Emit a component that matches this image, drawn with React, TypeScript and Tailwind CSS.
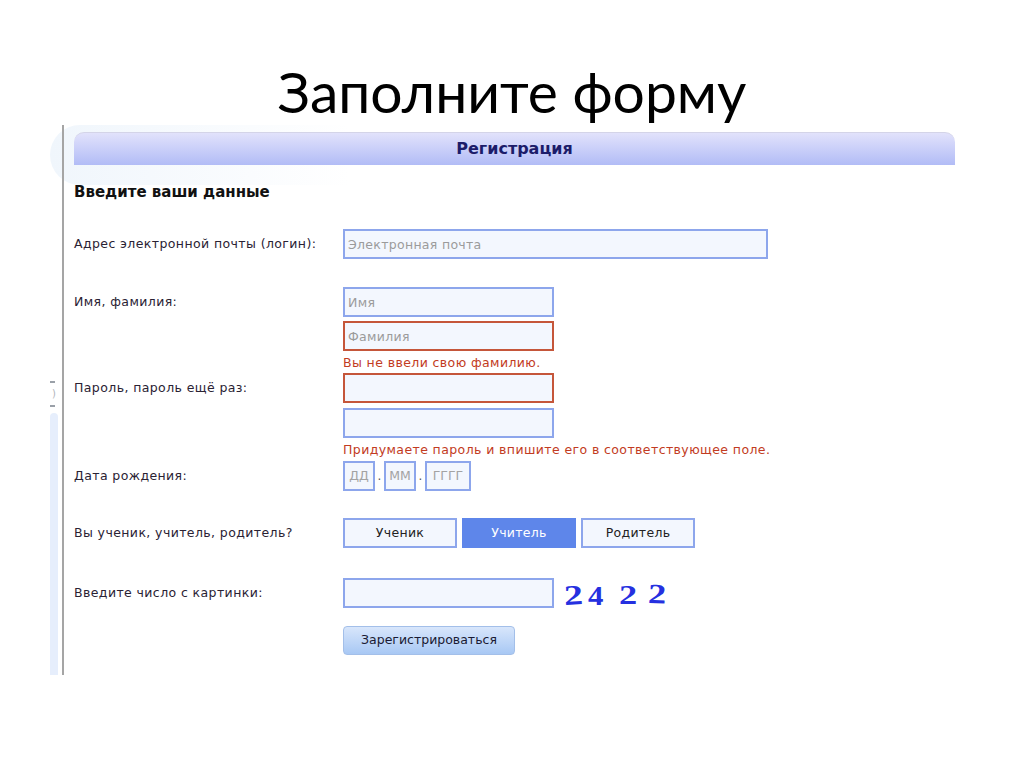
import React from 'react';

const labelCls = 'w-[269px] shrink-0 h-[30px] flex items-center text-[12.5px] tracking-[0.4px] text-[#2a2233]';
const inputCls =
  'block h-[30px] border-2 border-[#8da6ec] bg-[#f3f7fe] px-[3px] text-[12.5px] tracking-[0.3px] text-[#333] outline-none placeholder:text-[#9b9b9b]';
const errorInputCls =
  'block h-[30px] border-2 border-[#c5563a] bg-[#f3f7fe] px-[3px] text-[12.5px] tracking-[0.3px] text-[#333] outline-none placeholder:text-[#9b9b9b]';
const errorText = 'h-[16px] flex items-center text-[12.5px] tracking-[0.4px] text-[#c23b22]';

function DateBox({ text, w }: { text: string; w: string }) {
  return (
    <div className={`${w} h-[30px] border-2 border-[#8da6ec] bg-[#f3f7fe] flex items-center justify-center text-[12.5px] text-[#a3a3a3]`}>
      {text}
    </div>
  );
}

function RoleButton({ text, active }: { text: string; active?: boolean }) {
  return (
    <div
      className={
        active
          ? 'w-[114px] h-[30px] border-2 border-[#5e86ea] bg-[#5e86ea] flex items-center justify-center text-[12.5px] tracking-[0.3px] text-white'
          : 'w-[114px] h-[30px] border-2 border-[#8da6ec] bg-[#f3f7fe] flex items-center justify-center text-[12.5px] tracking-[0.3px] text-[#222]'
      }
    >
      {text}
    </div>
  );
}

export default function App() {
  return (
    <div className="relative w-[1024px] h-[767px] bg-white overflow-hidden font-['DejaVu_Sans',sans-serif]">
      {/* slide title */}
      <div className="h-[125px] pt-[60px] text-center font-['Lato',sans-serif] text-[57px] leading-[62px] text-black">
        Заполните форму
      </div>

      {/* screenshot */}
      <div className="relative flex ml-[50px] h-[550px]">
        {/* faint background swoosh */}
        <div className="absolute left-0 top-0 w-[300px] h-[60px] rounded-l-[30px] bg-gradient-to-r from-[#f0f6fc] to-white/0" />

        {/* left margin artifacts */}
        <div className="relative w-[12px] flex flex-col items-start">
          <div className="h-[256px]" />
          <div className="w-[5px] h-[2px] bg-[#9aa0a8]" />
          <div className="h-[14px] text-[10px] leading-[14px] text-[#b0b4ba] ml-[2px] mt-[4px]">)</div>
          <div className="w-[5px] h-[2px] bg-[#9aa0a8] mt-[4px]" />
          <div className="mt-[6px] w-[8px] flex-1 rounded-t-[4px] bg-[#e6eefc]" />
        </div>

        <div className="relative w-[2px] bg-[#a5a5a5]" />

        <div className="relative ml-[10px] w-[881px]">
          {/* header bar */}
          <div className="mt-[7px] h-[33px] rounded-t-[10px] border-t border-[#d4d4e8] bg-gradient-to-b from-[#e2e2fb] to-[#b2bcf6] flex items-center justify-center">
            <span className="text-[16px] font-bold text-[#1c1c6a]">Регистрация</span>
          </div>

          <div className="mt-[18px] h-[18px] flex items-center text-[15px] font-bold text-[#111]">Введите ваши данные</div>

          {/* email */}
          <div className="mt-[28px] flex">
            <div className={labelCls}>Адрес электронной почты (логин):</div>
            <input className={`${inputCls} w-[425px]`} placeholder="Электронная почта" readOnly />
          </div>

          {/* name */}
          <div className="mt-[28px] flex">
            <div className={labelCls}>Имя, фамилия:</div>
            <div className="flex flex-col">
              <input className={`${inputCls} w-[211px]`} placeholder="Имя" readOnly />
              <input className={`${errorInputCls} w-[211px] mt-[4px]`} placeholder="Фамилия" readOnly />
              <div className={`${errorText} mt-[4px]`}>Вы не ввели свою фамилию.</div>
            </div>
          </div>

          {/* password */}
          <div className="mt-[2px] flex">
            <div className={labelCls}>Пароль, пароль ещё раз:</div>
            <div className="flex flex-col">
              <input className={`${errorInputCls} w-[211px]`} readOnly />
              <input className={`${inputCls} w-[211px] mt-[5px]`} readOnly />
              <div className={`${errorText} mt-[4px] whitespace-nowrap`}>
                Придумаете пароль и впишите его в соответствующее поле.
              </div>
            </div>
          </div>

          {/* birth date */}
          <div className="mt-[3px] flex">
            <div className={labelCls}>Дата рождения:</div>
            <div className="flex items-center">
              <DateBox text="ДД" w="w-[32px]" />
              <span className="w-[9px] text-center text-[12px] text-[#555]">.</span>
              <DateBox text="ММ" w="w-[32px]" />
              <span className="w-[9px] text-center text-[12px] text-[#555]">.</span>
              <DateBox text="ГГГГ" w="w-[46px]" />
            </div>
          </div>

          {/* role */}
          <div className="mt-[27px] flex">
            <div className={labelCls}>Вы ученик, учитель, родитель?</div>
            <div className="flex gap-[5px]">
              <RoleButton text="Ученик" />
              <RoleButton text="Учитель" active />
              <RoleButton text="Родитель" />
            </div>
          </div>

          {/* captcha */}
          <div className="mt-[30px] flex">
            <div className={labelCls}>Введите число с картинки:</div>
            <input className={`${inputCls} w-[211px]`} readOnly />
            <div className="ml-[10px] h-[30px] pb-[1px] flex items-end font-['Liberation_Serif',serif] font-bold text-[28px] leading-[22px] text-[#2530e0]">
              <span className="inline-block w-[24px] origin-left scale-x-[1.35] -rotate-3">2</span>
              <span className="inline-block w-[31px] origin-left scale-x-[1.1]">4</span>
              <span className="inline-block w-[29px] origin-left scale-x-[1.3] -translate-y-[1px]">2</span>
              <span className="inline-block w-[22px] origin-left scale-x-[1.3] -translate-y-[2px] rotate-2">2</span>
            </div>
          </div>

          {/* submit */}
          <div className="mt-[18px] flex">
            <div className="w-[269px] shrink-0" />
            <div className="w-[172px] h-[29px] rounded-[4px] border border-[#a3bfe9] bg-gradient-to-b from-[#d8e6fb] to-[#a8c8f4] flex items-center justify-center text-[12.5px] text-[#1a1a33]">
              Зарегистрироваться
            </div>
          </div>
        </div>
      </div>
    </div>
  );
}
